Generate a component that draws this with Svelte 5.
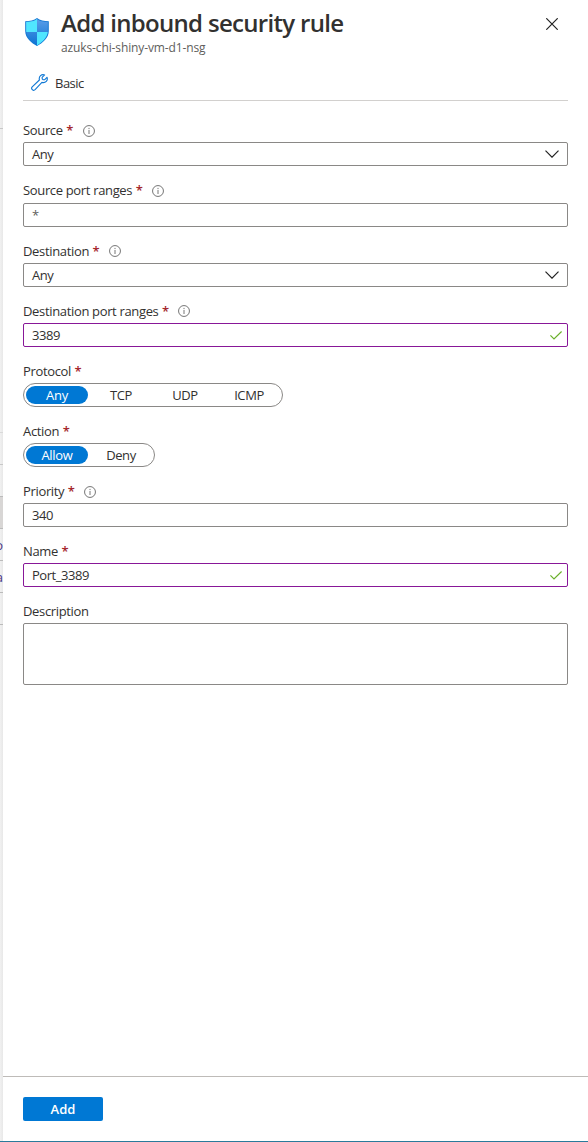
<script>
  const fields = [
    { label: 'Source', required: true, info: true, kind: 'select', value: 'Any' },
    { label: 'Source port ranges', required: true, info: true, kind: 'text', value: '*', muted: true },
    { label: 'Destination', required: true, info: true, kind: 'select', value: 'Any' },
    { label: 'Destination port ranges', required: true, info: true, kind: 'text', value: '3389', valid: true },
    { label: 'Protocol', required: true, kind: 'options', options: ['Any', 'TCP', 'UDP', 'ICMP'] },
    { label: 'Action', required: true, kind: 'options', options: ['Allow', 'Deny'] },
    { label: 'Priority', required: true, info: true, kind: 'text', value: '340' },
    { label: 'Name', required: true, kind: 'text', value: 'Port_3389', valid: true },
    { label: 'Description', kind: 'area' }
  ];
</script>

<div class="page">
  <div class="behind">
    <i class="line l1"></i><i class="line l2"></i><i class="line l3"></i>
    <i class="band"></i>
    <span class="cell">o</span>
    <span class="cell">a</span>
    <span class="cell"></span>
  </div>
  <section class="panel">
    <header>
      <svg class="shield" width="24" height="28" viewBox="0 0 24 28">
        <defs>
          <linearGradient id="blue" x1="0" y1="0" x2="0" y2="28" gradientUnits="userSpaceOnUse">
            <stop offset="0" stop-color="#5e9fe9" /><stop offset="1" stop-color="#0a72d2" />
          </linearGradient>
          <clipPath id="inner"><path d="M12 1C9.500 3.300 5.500 3.700 1.200 4V13C1.200 19.500 7 24.200 12 27.400C17 24.200 22.800 19.500 22.800 13V4C18.500 3.700 14.500 3.300 12 1Z" /></clipPath>
        </defs>
        <path d="M12 0C9 2.700 5 3 .2 3.300V13C.2 20 6.500 25 12 28C17.500 25 23.800 20 23.800 13V3.300C19 3 15 2.700 12 0Z" fill="#1478d4" />
        <g clip-path="url(#inner)">
          <rect width="24" height="28" fill="url(#blue)" />
          <path d="M0 0H12V14H0ZM12 14H24V28H12Z" fill="#50e6ff" />
        </g>
      </svg>
      <div class="titles">
        <h1>Add inbound security rule</h1>
        <p>azuks-chi-shiny-vm-d1-nsg</p>
      </div>
      <svg class="close" width="12" height="12" viewBox="0 0 12 12"><path d="M.3 .3L11.700 11.700M11.700 .3L.3 11.700" /></svg>
    </header>
    <div class="toolbar">
      <svg width="17" height="17" viewBox="0 0 17 17"><path d="M13.600 .9C10.600 -.2 7.500 2.200 8.400 6L1.200 12.900C-.5 14.700 2.300 17.400 4.100 15.700L10.900 8.400C14.600 9.400 17.200 6.300 16 3.300L13.500 5.800L12 5.600L11.200 4.800L11.100 3.400Z" /></svg>
      <span>Basic</span>
    </div>
    <form>
      {#each fields as field, i}
        <div class="field f{i}">
          <div class="label">
            <span>{field.label}</span>
            {#if field.required}<b>*</b>{/if}
            {#if field.info}
              <svg width="12" height="12" viewBox="0 0 12 12"><circle cx="6" cy="6" r="5.450" /><path d="M6 5V9M6 2.900V4.100" /></svg>
            {/if}
          </div>
          {#if field.kind === 'options'}
            <div class="options">
              {#each field.options as option, n}
                <span class="option" class:on={n === 0}>{option}</span>
              {/each}
            </div>
          {:else}
            <div class="box" class:valid={field.valid} class:area={field.kind === 'area'}>
              <span class:muted={field.muted}>{field.value ?? ''}</span>
              {#if field.kind === 'select'}
                <svg class="chevron" width="14" height="8" viewBox="0 0 14 8"><path d="M.5 .7L7 7.200L13.500 .7" /></svg>
              {:else if field.valid}
                <svg class="check" width="12" height="9" viewBox="0 0 12 9"><path d="M.4 4.300L4 7.900L11.600 .5" /></svg>
              {/if}
            </div>
          {/if}
        </div>
      {/each}
    </form>
    <footer><button>Add</button></footer>
  </section>
</div>

<style>
  .page {
    box-sizing: border-box;
    display: flex;
    width: 588px;
    height: 1142px;
    overflow: hidden;
    border-bottom: 1px solid #2b7a9b;
    background: #fff;
    color: #323130;
    font: 13px/20px "Open Sans", "Noto Sans", sans-serif;
  }
  .behind {
    flex: 0 0 3px;
    overflow: hidden;
    background: linear-gradient(90deg, #f1f1f1, #e8e8e8);
  }
  .behind i { display: block; }
  .line { height: 1px; background: #c8c8c8; }
  .l1 { margin-top: 128px; }
  .l2 { margin-top: 303px; background: #dadada; }
  .l3 { margin-top: 31px; }
  .band { height: 31px; margin-top: 31px; background: #d8d6d5; border-top: 1px solid #bbb; }
  .cell {
    display: flex;
    box-sizing: border-box;
    height: 32px;
    justify-content: flex-end;
    align-items: center;
    border-top: 1px solid #bbb;
    color: #4b3785;
  }
  .cell:last-child { border-bottom: 1px solid #bbb; height: 33px; }
  .panel { flex: 1; display: flex; flex-direction: column; min-width: 0; }
  header { display: flex; height: 72px; padding: 0 30px 0 22px; }
  .shield { margin-top: 18px; }
  .titles { flex: 1; margin-left: 12px; }
  h1 { margin: 7px 0 0; font-size: 24px; line-height: 32px; font-weight: 600; letter-spacing: -.69px; white-space: nowrap; }
  p { margin: 1px 0 0; font-size: 12px; line-height: 16px; color: #605e5c; letter-spacing: -.12px; }
  .close { margin-top: 18px; fill: none; stroke: #222; stroke-width: 1.200; }
  .toolbar {
    display: flex;
    height: 28px;
    margin: 0 20px;
    padding-left: 8px;
    border-bottom: 1px solid #d2d0ce;
  }
  .toolbar svg { margin: 2px 7px 0 0; fill: none; stroke: #0f78d4; stroke-width: 1.100; stroke-linejoin: round; }
  .toolbar span { margin-top: 1px; letter-spacing: -.5px; }
  form { flex: 1; padding: 19px 20px 0; }
  .field { height: 60px; }
  .f1 { height: 61px; }
  .label { display: flex; height: 22px; letter-spacing: -.34px; }
  .f1 .label { height: 23px; }
  .label b { margin-left: 3.500px; color: #a4262c; font-weight: 600; }
  .label svg { margin: 5px 0 0 9.500px; fill: none; stroke: #666; stroke-width: .900; }
  .f2 .label svg, .f3 .label svg { margin-top: 4px; }
  .box {
    display: flex;
    box-sizing: border-box;
    height: 24px;
    align-items: center;
    justify-content: space-between;
    padding: 0 8px;
    border: 1px solid #8a8886;
    border-radius: 2px;
    letter-spacing: -.45px;
  }
  .valid { border-color: #881798; padding-right: 5px; }
  .area { height: 62px; }
  .muted { color: #605e5c; }
  .chevron, .check { fill: none; stroke: #222; stroke-width: 1.200; }
  .check { stroke: #6bb02b; }
  .options {
    display: inline-flex;
    box-sizing: border-box;
    height: 24px;
    gap: 2px;
    padding: 2px;
    border: 1px solid #8a8886;
    border-radius: 12px;
  }
  .option { width: 62px; height: 18px; line-height: 18px; border-radius: 9px; text-align: center; letter-spacing: -.4px; }
  .on { background: #0078d4; color: #fff; font-weight: 500; letter-spacing: -.3px; }
  footer { box-sizing: border-box; height: 65px; padding: 20px; border-top: 1px solid #bebbb8; }
  button {
    display: block;
    width: 80px;
    height: 24px;
    padding: 0;
    border: 0;
    border-radius: 2px;
    background: #0078d4;
    color: #fff;
    font: 600 13px/23px "Open Sans", sans-serif;
  }
</style>
